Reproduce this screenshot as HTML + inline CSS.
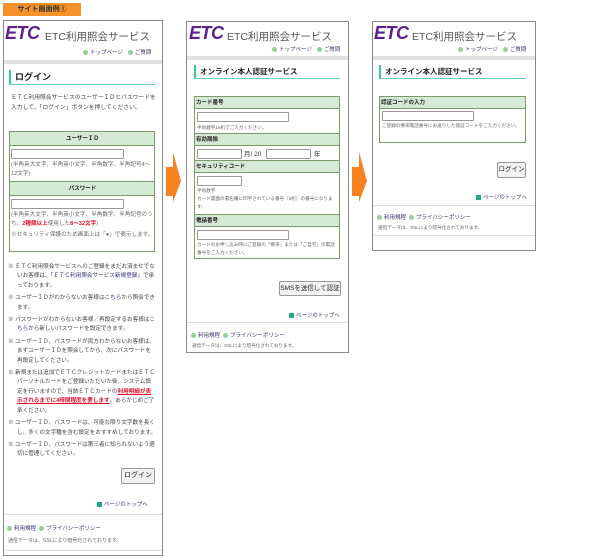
<!DOCTYPE html>
<html><head><meta charset="utf-8"><style>
*{margin:0;padding:0;box-sizing:border-box}
body{width:600px;height:559px;background:#fff;position:relative;overflow:hidden;font-family:"Liberation Sans","Noto Sans CJK JP",sans-serif;color:#444}
.a{position:absolute}
.panel{position:absolute;border:1px solid #888;background:#fff}
.logo{position:absolute;font:italic 900 18px "Liberation Sans",sans-serif;color:#5b1f8f;letter-spacing:-0.5px}
.ttl{position:absolute;font-size:10.5px;color:#555}
.lk{position:absolute;font-size:5.5px;color:#336;white-space:nowrap}
.lk i{display:inline-block;width:5px;height:5px;border-radius:50%;background:#9c9;margin:0 2px 0 5px;vertical-align:middle}
.bar{position:absolute;height:4px;background:#e2e2e2}
.hd{position:absolute;font-weight:bold;color:#222;border-left:2px solid #3c9;padding-left:4px;border-bottom:1px solid #6cb;}
.t{position:absolute;font-size:5.6px;line-height:9px;color:#666}
.th{position:absolute;background:#d5ead5;border:1px solid #7c9a6c;font-size:5.5px;font-weight:bold;color:#222;line-height:12px;padding-left:1px}
.box{position:absolute;border:1px solid #7c9a6c;border-top:none}
.in{position:absolute;border:1px solid #999;background:#fff;height:10px;border-radius:1px}
.btn{position:absolute;border:1px solid #999;background:#f2f2f2;font-size:7px;text-align:center;color:#222;border-radius:2px}
.pt{position:absolute;font-size:5.5px;color:#336}
.pt b{display:inline-block;width:5px;height:5px;background:#2a8;margin-right:2px;vertical-align:middle}
.fl{position:absolute;height:1px;background:#ddd}
.red{color:#e0102a;font-weight:bold}
.blue{color:#337}
</style></head><body>
<div class="a" style="left:3px;top:3px;width:78px;height:13px;background:#f7922b;font-size:7px;font-weight:bold;color:#333;text-align:center;line-height:13px">サイト画面例①</div>

<svg class="a" style="left:0;top:0" width="600" height="559"><polygon points="166,167 173,167 173,152 181,181 173,202 173,196 166,196" fill="#f7821f"/><polygon points="352,167 359,167 359,152 367,181 359,202 359,196 352,196" fill="#f7821f"/></svg>

<!-- panel 1 -->
<div class="panel" style="left:3px;top:20px;width:160px;height:536px"></div>
<div class="logo" style="left:5px;top:23px">ETC</div>
<div class="ttl" style="left:45px;top:29px">ETC利用照会サービス</div>
<div class="lk" style="left:78px;top:48px"><i></i>トップページ<i></i>ご質問</div>
<div class="bar" style="left:4px;top:60px;width:158px"></div>
<div class="hd" style="left:9px;top:70px;width:146px;font-size:9px;line-height:14px">ログイン</div>
<div class="t" style="left:11px;top:94px;width:145px;font-size:5.8px;line-height:9.5px;color:#444">ＥＴＣ利用照会サービスのユーザーＩＤとパスワードを入力して、「ログイン」ボタンを押してください。</div>
<div class="box" style="left:9px;top:131px;width:146px;height:121px"></div>
<div class="th" style="left:9px;top:131px;width:146px;height:15px;text-align:center;line-height:14px">ユーザーＩＤ</div>
<div class="in" style="left:11px;top:149px;width:113px"></div>
<div class="t" style="left:11px;top:161px;width:143px">(半角英大文字、半角英小文字、半角数字、半角記号4～12文字)</div>
<div class="th" style="left:9px;top:181px;width:146px;height:15px;text-align:center;line-height:14px">パスワード</div>
<div class="in" style="left:11px;top:199px;width:113px"></div>
<div class="t" style="left:11px;top:211px;width:143px">(半角英大文字、半角英小文字、半角数字、半角記号のうち、<span class="red">2種類以上</span>使用した<span class="red">8～32文字</span>)</div>
<div class="t" style="left:11px;top:231px;width:143px">※セキュリティ保護のため画面上は「●」で表示します。</div>
<div class="t" style="left:8px;top:263px;width:148px;font-size:5.6px;line-height:9.4px;color:#444">
<p style="padding-left:9px;text-indent:-9px;margin-bottom:3px">※ ＥＴＣ利用照会サービスへのご登録をまだお済ませでないお客様は、<span class="blue">「ＥＴＣ利用照会サービス新規登録</span>」で承っております。</p>
<p style="padding-left:9px;text-indent:-9px;margin-bottom:3px">※ ユーザーＩＤがわからないお客様は<span class="blue">こちら</span>から照会できます。</p>
<p style="padding-left:9px;text-indent:-9px;margin-bottom:3px">※ パスワードがわからないお客様／再設定するお客様は<span class="blue">こちら</span>から新しいパスワードを設定できます。</p>
<p style="padding-left:9px;text-indent:-9px;margin-bottom:3px">※ ユーザーＩＤ、パスワードが両方わからないお客様は、まずユーザーＩＤを照会してから、次にパスワードを再設定してください。</p>
<p style="padding-left:9px;text-indent:-9px;margin-bottom:3px">※ 新規または追加でＥＴＣクレジットカードまたはＥＴＣパーソナルカードをご登録いただいた後、システム設定を行いますので、当該ＥＴＣカードの<span class="red" style="text-decoration:underline">利用明細が表示されるまでに4時間程度を要します</span>。あらかじめご了承ください。</p>
<p style="padding-left:9px;text-indent:-9px;margin-bottom:3px">※ ユーザーＩＤ、パスワードは、可能な限り文字数を長くし、多くの文字種を含む設定をおすすめしております。</p>
<p style="padding-left:9px;text-indent:-9px">※ ユーザーＩＤ、パスワードは第三者に知られないよう適切に管理してください。</p>
</div>
<div class="btn" style="left:121px;top:468px;width:34px;height:16px;line-height:14px">ログイン</div>
<div class="pt" style="left:97px;top:500px"><b></b>ページのトップへ</div>
<div class="fl" style="left:4px;top:514px;width:158px"></div>
<div class="lk" style="left:2px;top:524px"><i></i>利用規程<i style="margin-left:3px"></i>プライバシーポリシー</div>
<div class="t" style="left:8px;top:537px;font-size:5px">通信データは、SSLにより暗号化されております。</div>
<div class="fl" style="left:4px;top:550px;width:158px"></div>

<!-- panel 2 -->
<div class="panel" style="left:186px;top:21px;width:163px;height:332px"></div>
<div class="logo" style="left:189px;top:23px">ETC</div>
<div class="ttl" style="left:227px;top:29px">ETC利用照会サービス</div>
<div class="lk" style="left:267px;top:45px"><i></i>トップページ<i></i>ご質問</div>
<div class="bar" style="left:187px;top:56px;width:161px"></div>
<div class="hd" style="left:194px;top:65px;width:146px;font-size:7.5px;line-height:13px">オンライン本人認証サービス</div>
<div class="box" style="left:194px;top:96px;width:146px;height:163px"></div>
<div class="th" style="left:194px;top:96px;width:146px;height:13px">カード番号</div>
<div class="in" style="left:197px;top:112px;width:92px"></div>
<div class="t" style="left:197px;top:123px;font-size:4.6px">半角数字16桁でご入力ください。</div>
<div class="th" style="left:194px;top:133px;width:146px;height:13px">有効期限</div>
<div class="in" style="left:197px;top:149px;width:45px"></div>
<div class="a" style="left:244px;top:148px;font-size:6.5px;color:#333">月/ 20</div>
<div class="in" style="left:266px;top:149px;width:45px"></div>
<div class="a" style="left:314px;top:148px;font-size:6.5px;color:#333">年</div>
<div class="th" style="left:194px;top:160px;width:146px;height:13px">セキュリティコード</div>
<div class="in" style="left:197px;top:176px;width:45px"></div>
<div class="t" style="left:197px;top:187px;width:140px;font-size:4.6px;line-height:8px">半角数字<br>カード裏面の署名欄に印字されている番号（3桁）の番号になります。</div>
<div class="th" style="left:194px;top:214px;width:146px;height:13px">電話番号</div>
<div class="in" style="left:197px;top:230px;width:92px"></div>
<div class="t" style="left:197px;top:241px;width:140px;font-size:4.6px;line-height:8px">カードのお申し込み時にご登録の「携帯」または「ご自宅」の電話番号をご入力ください。</div>
<div class="btn" style="left:279px;top:281px;width:62px;height:15px;line-height:13px;font-size:6.5px">SMSを送信して認証</div>
<div class="pt" style="left:289px;top:311px"><b></b>ページのトップへ</div>
<div class="fl" style="left:187px;top:322px;width:161px"></div>
<div class="lk" style="left:186px;top:331px"><i></i>利用規程<i style="margin-left:3px"></i>プライバシーポリシー</div>
<div class="t" style="left:192px;top:341px;font-size:4.6px">通信データは、SSLにより暗号化されております。</div>

<!-- panel 3 -->
<div class="panel" style="left:372px;top:21px;width:164px;height:230px"></div>
<div class="logo" style="left:374px;top:23px">ETC</div>
<div class="ttl" style="left:412px;top:29px">ETC利用照会サービス</div>
<div class="lk" style="left:453px;top:45px"><i></i>トップページ<i></i>ご質問</div>
<div class="bar" style="left:373px;top:56px;width:162px"></div>
<div class="hd" style="left:379px;top:65px;width:147px;font-size:7.5px;line-height:13px">オンライン本人認証サービス</div>
<div class="box" style="left:379px;top:96px;width:147px;height:47px"></div>
<div class="th" style="left:379px;top:96px;width:147px;height:13px">認証コードの入力</div>
<div class="in" style="left:382px;top:111px;width:92px"></div>
<div class="t" style="left:382px;top:122px;width:142px;font-size:4.6px;line-height:8px">ご登録の携帯電話番号にお送りした認証コードをご入力ください。</div>
<div class="btn" style="left:497px;top:162px;width:29px;height:16px;line-height:14px;font-size:6.5px">ログイン</div>
<div class="pt" style="left:476px;top:193px"><b></b>ページのトップへ</div>
<div class="fl" style="left:373px;top:205px;width:162px"></div>
<div class="lk" style="left:372px;top:213px"><i></i>利用規程<i style="margin-left:3px"></i>プライバシーポリシー</div>
<div class="t" style="left:378px;top:223px;font-size:4.6px">通信データは、SSLにより暗号化されております。</div>
<div class="fl" style="left:373px;top:235px;width:162px"></div>
</body></html>
